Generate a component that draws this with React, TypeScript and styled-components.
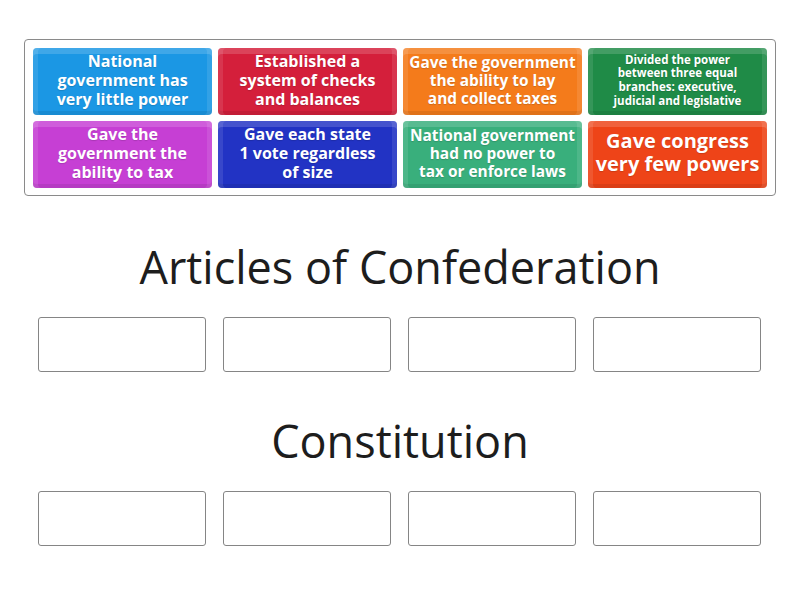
import React from "react";
import styled, { createGlobalStyle } from "styled-components";

const GlobalStyle = createGlobalStyle`
  html, body {
    margin: 0;
    padding: 0;
    background: #fff;
    font-family: "Open Sans", "Liberation Sans", sans-serif;
  }
`;

const Page = styled.div`
  width: 800px;
  height: 600px;
  padding-top: 39px;
  box-sizing: border-box;
`;

const Pool = styled.div`
  margin: 0 24px;
  height: 157px;
  box-sizing: border-box;
  border: 1px solid #8a8a8a;
  border-radius: 4px;
  padding: 8px 8px 0 8px;
  display: grid;
  grid-template-columns: repeat(4, 179px);
  grid-auto-rows: 67px;
  column-gap: 6px;
  row-gap: 6px;
`;

const Tile = styled.div<{ $bg: string; $size: number; $lh: number; $lift: number }>`
  background: ${(p) => p.$bg};
  border-radius: 4px;
  color: #fff;
  font-weight: 700;
  font-size: ${(p) => p.$size}px;
  line-height: ${(p) => p.$lh}px;
  text-align: center;
  display: flex;
  align-items: center;
  justify-content: center;
  white-space: nowrap;
  padding-bottom: ${(p) => p.$lift}px;
  box-sizing: border-box;
  box-shadow: inset 0 6px 0 rgba(255, 255, 255, 0.16),
    inset 5px 0 0 rgba(255, 255, 255, 0.1),
    inset -5px 0 0 rgba(255, 255, 255, 0.1),
    inset 0 -4px 0 rgba(0, 0, 0, 0.08);
  text-shadow: 0 1px 1px rgba(0, 0, 0, 0.15);
`;

const Heading = styled.h2`
  margin: 0;
  font-weight: 400;
  font-size: 45px;
  color: #1d1d1d;
  text-align: center;
  line-height: 60px;
`;

const Slots = styled.div`
  display: grid;
  grid-template-columns: repeat(4, 168px);
  column-gap: 17px;
  padding-left: 38px;
`;

const Slot = styled.div`
  height: 55px;
  box-sizing: border-box;
  border: 1px solid #858585;
  border-radius: 3px;
  background: #fff;
`;

const Group = styled.section<{ $top: number }>`
  margin-top: ${(p) => p.$top}px;
  display: flex;
  flex-direction: column;
  gap: 20px;
`;

const tiles = [
  { lines: ["National", "government has", "very little power"], bg: "#1b97e4", size: 16, lh: 19, lift: 2 },
  { lines: ["Established a", "system of checks", "and balances"], bg: "#d41f3b", size: 16, lh: 19, lift: 2 },
  { lines: ["Gave the government", "the ability to lay", "and collect taxes"], bg: "#f47b1b", size: 15.4, lh: 18, lift: 2 },
  { lines: ["Divided the power", "between three equal", "branches: executive,", "judicial and legislative"], bg: "#1f8b47", size: 11.5, lh: 13.7, lift: 3 },
  { lines: ["Gave the", "government the", "ability to tax"], bg: "#c63fd4", size: 16, lh: 19, lift: 2 },
  { lines: ["Gave each state", "1 vote regardless", "of size"], bg: "#2233c4", size: 16, lh: 19, lift: 2 },
  { lines: ["National government", "had no power to", "tax or enforce laws"], bg: "#39af7c", size: 15.4, lh: 18, lift: 2 },
  { lines: ["Gave congress", "very few powers"], bg: "#ee4418", size: 20, lh: 23, lift: 6 },
];

export default function App() {
  return (
    <>
      <GlobalStyle />
      <Page>
        <Pool>
          {tiles.map((t) => (
            <Tile key={t.lines.join(" ")} $bg={t.bg} $size={t.size} $lh={t.lh} $lift={t.lift}>
              <span>
                {t.lines.map((l, i) => (
                  <React.Fragment key={l}>
                    {i > 0 && <br />}
                    {l}
                  </React.Fragment>
                ))}
              </span>
            </Tile>
          ))}
        </Pool>
        <Group $top={41}>
          <Heading>Articles of Confederation</Heading>
          <Slots>
            {[0, 1, 2, 3].map((i) => (
              <Slot key={i} />
            ))}
          </Slots>
        </Group>
        <Group $top={39}>
          <Heading>Constitution</Heading>
          <Slots>
            {[0, 1, 2, 3].map((i) => (
              <Slot key={i} />
            ))}
          </Slots>
        </Group>
      </Page>
    </>
  );
}
